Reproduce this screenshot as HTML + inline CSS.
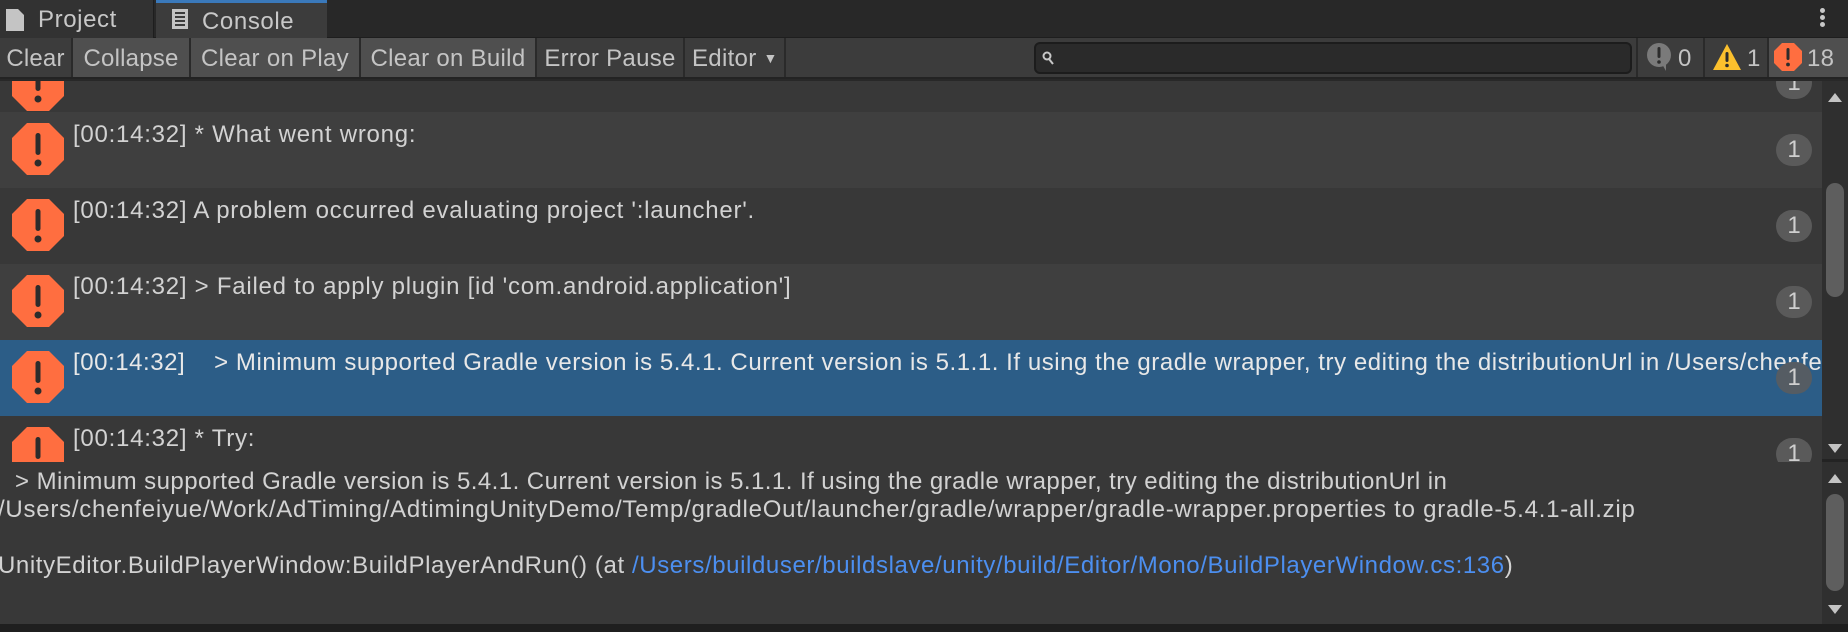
<!DOCTYPE html>
<html><head><meta charset="utf-8"><style>
*{margin:0;padding:0;box-sizing:border-box}
body{width:1848px;height:632px;overflow:hidden;background:#282828;font-family:"Liberation Sans",sans-serif;color:#d2d2d2;position:relative}
.abs{position:absolute}
.tabbar{left:0;top:0;width:1848px;height:38px;background:#282828;border-bottom:1px solid #1e1e1e}
.tab{top:0;height:38px;font-size:24px;letter-spacing:0.6px;line-height:40px;color:#c8c8c8}
.toolbar{left:0;top:38px;width:1848px;height:41px;background:#3c3c3c;border-bottom:2px solid #232323}
.btn{top:0;height:39px;font-size:24px;letter-spacing:0.3px;line-height:42px;color:#c4c4c4;text-align:center;border-right:2px solid #2a2a2a;white-space:nowrap}
.on{background:#4f4f4f}
.row{left:0;width:1822px;height:76px;overflow:hidden}
.row .t{position:absolute;left:73px;font-size:24px;letter-spacing:0.75px;line-height:26px;white-space:nowrap;color:#d2d2d2}
.ico{position:absolute;left:12px;width:52px;height:52px}
.badge{position:absolute;left:1776px;width:36px;height:32px;border-radius:16px;background:#5a5a5a;color:#cfcfcf;font-size:24px;line-height:32px;text-align:center}
.detail{left:0;top:462px;width:1822px;height:162px;background:#383838;overflow:hidden}
.dl{position:absolute;font-size:24px;letter-spacing:0.6px;line-height:28px;white-space:nowrap;color:#d2d2d2}
.sb{left:1822px;width:26px;background:#2f2f2f}
.thumb{position:absolute;left:4px;width:18px;border-radius:9px;background:#5e5e5e}
.arr{position:absolute;left:6px;width:0;height:0;border-left:7px solid transparent;border-right:7px solid transparent}
</style></head><body>
<div class="abs tabbar"></div>
<div class="abs tab" style="left:0;width:154px;background:#323232;padding-left:8px;border-right:1px solid #1e1e1e">
<svg width="18" height="22" style="position:absolute;left:6px;top:9px"><path d="M0 0h12l6 6v16H0z" fill="#c4c4c4"/></svg><span style="position:absolute;left:38px">Project</span></div>
<div class="abs tab" style="left:156px;width:171px;background:#3c3c3c;border-top:3px solid #3a79bb;line-height:37px">
<svg width="16" height="20" style="position:absolute;left:16px;top:6px"><rect x="0" y="0" width="16" height="20" fill="#c4c4c4"/><path d="M3 4h10M3 8h10M3 12h10M3 16h10" stroke="#3c3c3c" stroke-width="2"/></svg><span style="position:absolute;left:46px">Console</span></div>
<div class="abs" style="left:1820px;top:8px;width:6px">
<div style="width:5px;height:5px;border-radius:3px;background:#c8c8c8;margin-bottom:2px"></div><div style="width:5px;height:5px;border-radius:3px;background:#c8c8c8;margin-bottom:2px"></div><div style="width:5px;height:5px;border-radius:3px;background:#c8c8c8"></div></div>

<div class="abs toolbar">
<div class="abs btn" style="left:0;width:73px;letter-spacing:0.2px">Clear</div>
<div class="abs btn on" style="left:73px;width:118px;letter-spacing:0.2px">Collapse</div>
<div class="abs btn on" style="left:191px;width:170px">Clear on Play</div>
<div class="abs btn on" style="left:361px;width:176px">Clear on Build</div>
<div class="abs btn" style="left:537px;width:148px">Error Pause</div>
<div class="abs btn" style="left:685px;width:101px;text-align:left;padding-left:7px">Editor <span style="font-size:14px;position:relative;top:-3px">▼</span></div>
<div class="abs" style="left:1034px;top:4px;width:598px;height:32px;background:#2a2a2a;border:2px solid #1c1c1c;border-radius:6px">
<svg width="14" height="16" style="position:absolute;left:6px;top:7px"><circle cx="5" cy="5" r="3.5" stroke="#c8c8c8" stroke-width="2" fill="none"/><path d="M7 8l4 5" stroke="#c8c8c8" stroke-width="2"/></svg></div>
<div class="abs" style="left:1636px;top:0;width:2px;height:39px;background:#2a2a2a"></div>
<div class="abs btn" style="left:1638px;width:67px;text-align:left">
<svg width="28" height="30" style="position:absolute;left:8px;top:4px"><circle cx="13" cy="13" r="12" fill="#7a7a7a"/><path d="M16 22l4 7 0-9z" fill="#7a7a7a"/><rect x="11.5" y="5" width="3" height="11" rx="1.5" fill="#2c2c2c"/><circle cx="13" cy="20" r="1.8" fill="#2c2c2c"/></svg>
<span style="position:absolute;left:40px">0</span></div>
<div class="abs btn" style="left:1705px;width:64px;text-align:left">
<svg width="28" height="26" style="position:absolute;left:8px;top:6px"><path d="M14 0L28 26H0z" fill="#fbc02d"/><rect x="12.5" y="8" width="3" height="10" rx="1.5" fill="#2c2c2c"/><circle cx="14" cy="21.5" r="1.8" fill="#2c2c2c"/></svg>
<span style="position:absolute;left:42px">1</span></div>
<div class="abs btn on" style="left:1769px;width:79px;text-align:left;border-right:0">
<svg width="28" height="28" style="position:absolute;left:5px;top:5px"><path d="M8 0h12l8 8v12l-8 8H8l-8-8V8z" fill="#ff6e40"/><rect x="12.5" y="5" width="3" height="12" rx="1.5" fill="#2c2c2c"/><circle cx="14" cy="21.5" r="1.9" fill="#2c2c2c"/></svg>
<span style="position:absolute;left:38px">18</span></div>
</div>

<!-- list -->
<div class="abs" style="left:0;top:81px;width:1822px;height:381px;background:#383838;overflow:hidden">
<svg class="ico" style="top:-22px" viewBox="0 0 52 52"><path d="M15 0h22l15 15v22L37 52H15L0 37V15z" fill="#ff6e40"/><rect x="23.5" y="10" width="5" height="22" rx="2.5" fill="#2c2c2c"/><circle cx="26" cy="40" r="3.5" fill="#2c2c2c"/></svg>
<div class="badge" style="top:-14px">1</div>
</div>
<div class="abs row" style="top:112px;background:#3f3f3f">
<svg class="ico" style="top:11px" viewBox="0 0 52 52"><path d="M15 0h22l15 15v22L37 52H15L0 37V15z" fill="#ff6e40"/><rect x="23.5" y="10" width="5" height="22" rx="2.5" fill="#2c2c2c"/><circle cx="26" cy="40" r="3.5" fill="#2c2c2c"/></svg>
<div class="t" style="top:10px">[00:14:32] * What went wrong:</div><div class="badge" style="top:22px">1</div></div>
<div class="abs row" style="top:188px;background:#383838">
<svg class="ico" style="top:11px" viewBox="0 0 52 52"><path d="M15 0h22l15 15v22L37 52H15L0 37V15z" fill="#ff6e40"/><rect x="23.5" y="10" width="5" height="22" rx="2.5" fill="#2c2c2c"/><circle cx="26" cy="40" r="3.5" fill="#2c2c2c"/></svg>
<div class="t" style="top:10px">[00:14:32] A problem occurred evaluating project ':launcher'.</div><div class="badge" style="top:22px">1</div></div>
<div class="abs row" style="top:264px;background:#3f3f3f">
<svg class="ico" style="top:11px" viewBox="0 0 52 52"><path d="M15 0h22l15 15v22L37 52H15L0 37V15z" fill="#ff6e40"/><rect x="23.5" y="10" width="5" height="22" rx="2.5" fill="#2c2c2c"/><circle cx="26" cy="40" r="3.5" fill="#2c2c2c"/></svg>
<div class="t" style="top:10px">[00:14:32] &gt; Failed to apply plugin [id 'com.android.application']</div><div class="badge" style="top:22px">1</div></div>
<div class="abs row" style="top:340px;background:#2c5d87">
<svg class="ico" style="top:11px" viewBox="0 0 52 52"><path d="M15 0h22l15 15v22L37 52H15L0 37V15z" fill="#ff6e40"/><rect x="23.5" y="10" width="5" height="22" rx="2.5" fill="#2c2c2c"/><circle cx="26" cy="40" r="3.5" fill="#2c2c2c"/></svg>
<div class="t" style="top:10px;color:#e8e8e8;letter-spacing:0.55px">[00:14:32]&nbsp;&nbsp;&nbsp;&nbsp;&gt; Minimum supported Gradle version is 5.4.1. Current version is 5.1.1. If using the gradle wrapper, try editing the distributionUrl in /Users/chenfeiyue/Work</div><div class="badge" style="top:22px;background:#555c63">1</div></div>
<div class="abs row" style="top:416px;height:46px;background:#383838">
<svg class="ico" style="top:11px" viewBox="0 0 52 52"><path d="M15 0h22l15 15v22L37 52H15L0 37V15z" fill="#ff6e40"/><rect x="23.5" y="10" width="5" height="22" rx="2.5" fill="#2c2c2c"/><circle cx="26" cy="40" r="3.5" fill="#2c2c2c"/></svg>
<div class="t" style="top:10px">[00:14:32] * Try:</div><div class="badge" style="top:22px">1</div></div>

<div class="abs sb" style="top:81px;height:381px">
<div class="arr" style="top:12px;border-bottom:9px solid #c4c4c4"></div>
<div class="thumb" style="top:102px;height:114px"></div>
<div class="arr" style="top:363px;border-top:9px solid #c4c4c4"></div></div>
<div class="abs" style="left:1822px;top:459px;width:26px;height:3px;background:#232323"></div>

<div class="abs detail">
<div class="dl" style="left:15px;top:6px;letter-spacing:0.45px">&gt; Minimum supported Gradle version is 5.4.1. Current version is 5.1.1. If using the gradle wrapper, try editing the distributionUrl in</div>
<div class="dl" style="left:-2px;top:34px;letter-spacing:0.75px">/Users/chenfeiyue/Work/AdTiming/AdtimingUnityDemo/Temp/gradleOut/launcher/gradle/wrapper/gradle-wrapper.properties to gradle-5.4.1-all.zip</div>
<div class="dl" style="left:-2px;top:90px;letter-spacing:0.6px">UnityEditor.BuildPlayerWindow:BuildPlayerAndRun() (at <span style="color:#4c8ff0">/Users/builduser/buildslave/unity/build/Editor/Mono/BuildPlayerWindow.cs:136</span>)</div>
</div>
<div class="abs sb" style="top:462px;height:162px">
<div class="arr" style="top:12px;border-bottom:9px solid #c4c4c4"></div>
<div class="thumb" style="top:32px;height:97px"></div>
<div class="arr" style="top:143px;border-top:9px solid #c4c4c4"></div></div>
<div class="abs" style="left:0;top:624px;width:1848px;height:8px;background:#1f1f1f"></div>
</body></html>
